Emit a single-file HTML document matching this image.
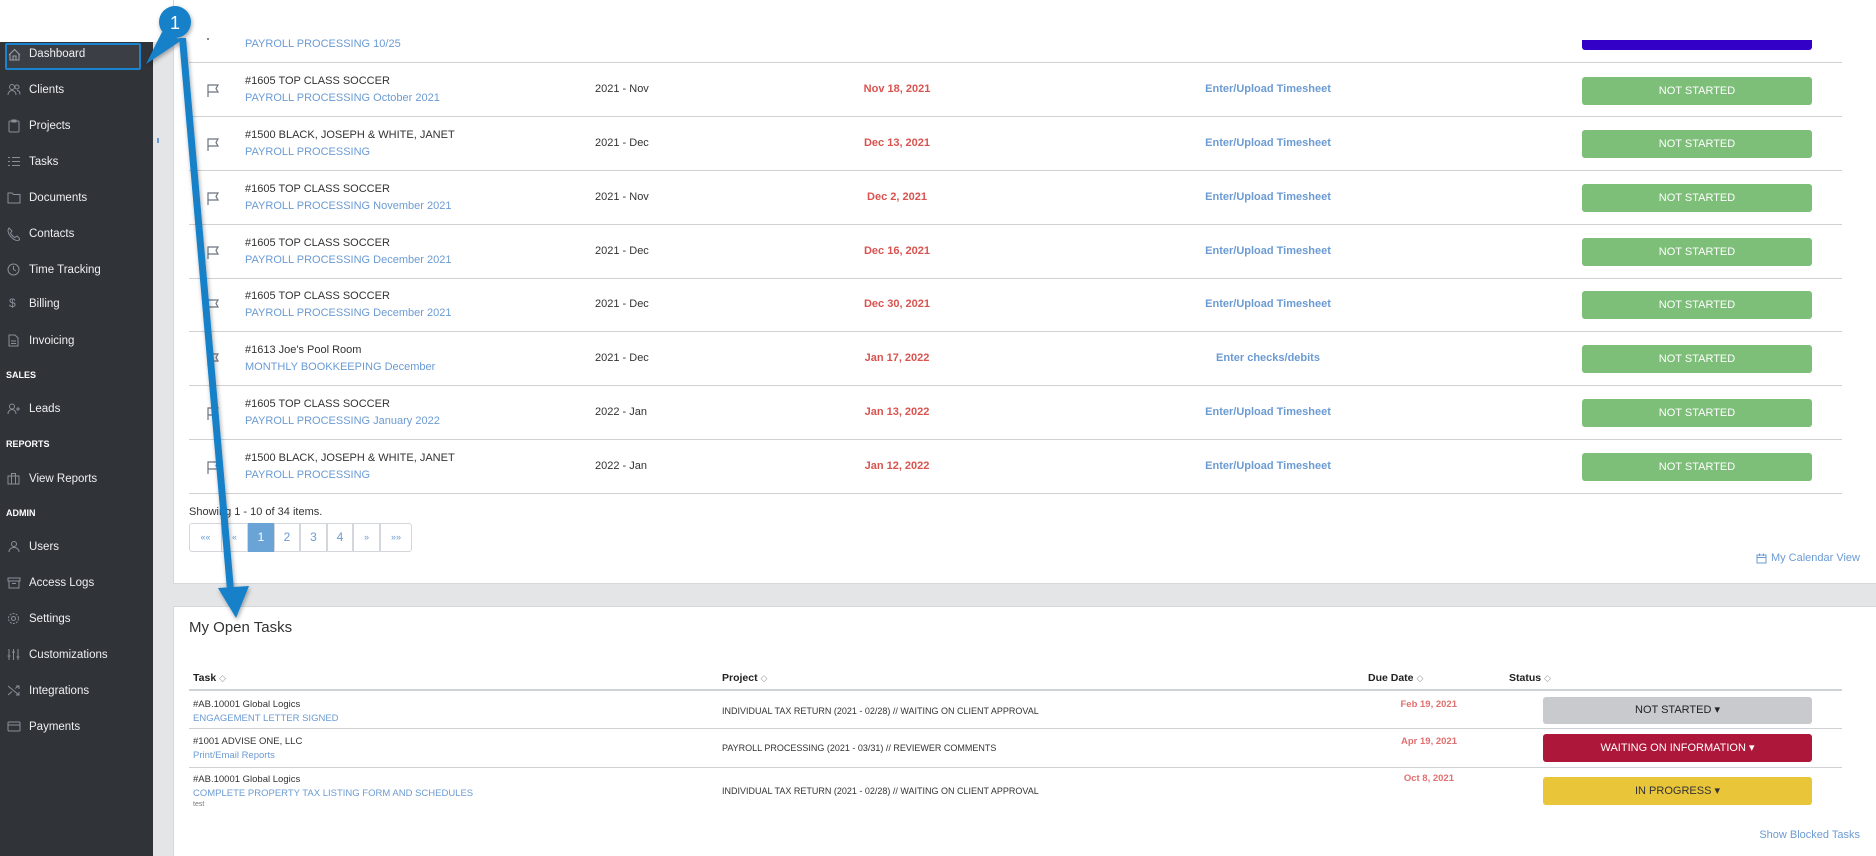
<!DOCTYPE html>
<html><head><meta charset="utf-8"><style>
*{margin:0;padding:0;box-sizing:border-box}
html,body{width:1876px;height:856px;overflow:hidden}
body{background:#fff;font-family:"Liberation Sans",sans-serif;position:relative;font-size:12px;color:#333}
.abs{position:absolute;white-space:nowrap}
#side{position:absolute;left:0;top:42px;width:153px;height:814px;background:#303338}
.mi{position:absolute;left:29px;color:#eef0f2;font-size:11.5px;line-height:14px}
.sec{position:absolute;left:6px;color:#fff;font-size:9px;font-weight:bold;line-height:12px}
#gutter{position:absolute;left:153px;top:42px;width:1723px;height:814px;background:#e4e5e7}
.card{position:absolute;left:173px;right:0;background:#fff;border:1px solid #d5d7da;border-right:none}
.hl{position:absolute;left:189px;width:1653px;height:1px;background:#cfd1d5}
.t1{color:#333;font-size:11px}
.t2{color:#6b9bd3;font-size:11px}
.red{color:#d9534f;font-size:11px;font-weight:bold;transform:translateX(-50%)}
.act{color:#6b9bd3;font-size:11px;font-weight:bold;transform:translateX(-50%)}
.btn{position:absolute;left:1582px;width:230px;height:28px;background:#7dbf78;color:#fff;border-radius:3px;text-align:center;line-height:28px;font-size:11px}
.pg{position:absolute;top:523px;height:29px;border:1px solid #d3d6da;margin-left:-1px;color:#6b9bd3;text-align:center;line-height:27px;font-size:12px;background:#fff}
.flag{position:absolute;left:206px;width:15px;height:15px}
.th{font-weight:bold;font-size:10.5px;color:#222}
.sb{position:absolute;left:1543px;width:269px;border-radius:3px;text-align:center;font-size:11px}
</style></head><body>
<div id="gutter"></div>
<div id="side"></div>
<div class="abs" style="left:5px;top:43px;width:136px;height:27px;border:2px solid #1b84cf;border-radius:2px;background:#3b3f45"></div>
<svg class="abs" style="left:8px;top:48px" width="13" height="13" viewBox="0 0 13 13" fill="none" stroke="#9aa0a8" stroke-width="1.1"><path d="M2 6v6h9V6M1 7l5.5-5.5L12 7M5 12V8h3v4"/></svg>
<div class="mi" style="top:47px">Dashboard</div>
<svg class="abs" style="left:7px;top:83px" width="14" height="13" viewBox="0 0 14 13" fill="none" stroke="#8a9099" stroke-width="1"><circle cx="5" cy="4" r="2.5"/><circle cx="10" cy="4" r="2"/><path d="M1 12c0-3 2-4.5 4-4.5s4 1.5 4 4.5M10 7.5c2 0 3 1.5 3 4"/></svg>
<div class="mi" style="top:83px">Clients</div>
<svg class="abs" style="left:8px;top:119px" width="12" height="14" viewBox="0 0 12 14" fill="none" stroke="#8a9099" stroke-width="1"><rect x="1" y="2" width="10" height="11" rx="1"/><path d="M4 1h4v2H4z"/></svg>
<div class="mi" style="top:119px">Projects</div>
<svg class="abs" style="left:8px;top:156px" width="12" height="11" viewBox="0 0 12 11" stroke="#8a9099" stroke-width="1"><path d="M0 1.5h2M4 1.5h8M0 5.5h2M4 5.5h8M0 9.5h2M4 9.5h8"/></svg>
<div class="mi" style="top:155px">Tasks</div>
<svg class="abs" style="left:7px;top:192px" width="14" height="12" viewBox="0 0 14 12" fill="none" stroke="#8a9099" stroke-width="1"><path d="M1 1h4l1.5 1.5H13V11H1z"/></svg>
<div class="mi" style="top:191px">Documents</div>
<svg class="abs" style="left:7px;top:227px" width="13" height="14" viewBox="0 0 13 14" fill="none" stroke="#8a9099" stroke-width="1"><path d="M2 1l3 3-1.5 2c1 2 2.5 3.5 4.5 4.5L10 9l3 3-2 2C6 13 1 8 1 3z"/></svg>
<div class="mi" style="top:227px">Contacts</div>
<svg class="abs" style="left:7px;top:263px" width="13" height="13" viewBox="0 0 13 13" fill="none" stroke="#8a9099" stroke-width="1"><circle cx="6.5" cy="6.5" r="5.5"/><path d="M6.5 3v3.5l2.5 1.5"/></svg>
<div class="mi" style="top:263px">Time Tracking</div>
<div class="abs" style="left:9px;top:296px;color:#8a9099;font-size:12px">$</div>
<div class="mi" style="top:297px">Billing</div>
<svg class="abs" style="left:8px;top:334px" width="11" height="13" viewBox="0 0 11 13" fill="none" stroke="#8a9099" stroke-width="1"><path d="M1 1h6l3 3v8H1zM3 7h5M3 9.5h5"/></svg>
<div class="mi" style="top:334px">Invoicing</div>
<div class="sec" style="top:369px">SALES</div>
<svg class="abs" style="left:7px;top:403px" width="14" height="12" viewBox="0 0 14 12" fill="none" stroke="#8a9099" stroke-width="1"><circle cx="5" cy="3.5" r="2.5"/><path d="M1 11c0-3 2-4.5 4-4.5s4 1.5 4 4.5M11 4v4M9 6h4"/></svg>
<div class="mi" style="top:402px">Leads</div>
<div class="sec" style="top:438px">REPORTS</div>
<svg class="abs" style="left:7px;top:472px" width="13" height="13" viewBox="0 0 13 13" fill="none" stroke="#8a9099" stroke-width="1"><rect x="1" y="4" width="11" height="8"/><path d="M4.5 4V12M8.5 4V12M4.5 4V1.5h4V4"/></svg>
<div class="mi" style="top:472px">View Reports</div>
<div class="sec" style="top:507px">ADMIN</div>
<svg class="abs" style="left:8px;top:540px" width="12" height="13" viewBox="0 0 12 13" fill="none" stroke="#8a9099" stroke-width="1"><circle cx="6" cy="4" r="2.5"/><path d="M1 12c0-3 2.5-4.5 5-4.5s5 1.5 5 4.5"/></svg>
<div class="mi" style="top:540px">Users</div>
<svg class="abs" style="left:7px;top:577px" width="14" height="12" viewBox="0 0 14 12" fill="none" stroke="#8a9099" stroke-width="1"><rect x="1" y="1" width="12" height="3"/><path d="M2 4v7h10V4M5 6.5h4"/></svg>
<div class="mi" style="top:576px">Access Logs</div>
<svg class="abs" style="left:7px;top:612px" width="13" height="13" viewBox="0 0 13 13" fill="none" stroke="#8a9099" stroke-width="1"><circle cx="6.5" cy="6.5" r="2"/><circle cx="6.5" cy="6.5" r="5" stroke-dasharray="2 1.2"/></svg>
<div class="mi" style="top:612px">Settings</div>
<svg class="abs" style="left:7px;top:648px" width="13" height="13" viewBox="0 0 13 13" stroke="#8a9099" stroke-width="1"><path d="M2 1v11M6.5 1v11M11 1v11M0.5 8h3M5 4h3M9.5 9h3"/></svg>
<div class="mi" style="top:648px">Customizations</div>
<svg class="abs" style="left:7px;top:684px" width="13" height="13" viewBox="0 0 13 13" fill="none" stroke="#8a9099" stroke-width="1"><path d="M1 2l11 9M9 11h3V8M1 11l4-3.5M8 4.5L12 2M9 2h3v3"/></svg>
<div class="mi" style="top:684px">Integrations</div>
<svg class="abs" style="left:7px;top:721px" width="14" height="11" viewBox="0 0 14 11" fill="none" stroke="#8a9099" stroke-width="1"><rect x="1" y="1" width="12" height="9" rx="1"/><path d="M1 4h12"/></svg>
<div class="mi" style="top:720px">Payments</div>
<div class="abs" style="left:157px;top:138px;width:2px;height:5px;background:#6b9bd3"></div>

<div class="abs" style="left:0;top:0;width:1876px;height:42px;background:#fff"></div>
<div class="card" style="top:-1px;height:585px;border-top:none"></div>
<div class="card" style="top:606px;height:250px;border-bottom:none"></div>

<div class="abs t2" style="left:245px;top:38px">PAYROLL PROCESSING 10/25</div>
<div class="abs" style="left:207px;top:38px;width:2px;height:2px;background:#888"></div>
<div class="abs" style="left:1582px;top:40px;width:230px;height:10px;background:#3300c8;border-radius:0 0 3px 3px"></div>

<div class="hl" style="top:62px"></div>
<div class="hl" style="top:116px"></div>
<div class="hl" style="top:170px"></div>
<div class="hl" style="top:224px"></div>
<div class="hl" style="top:278px"></div>
<div class="hl" style="top:331px"></div>
<div class="hl" style="top:385px"></div>
<div class="hl" style="top:439px"></div>
<div class="hl" style="top:493px"></div>

<svg class="flag" style="top:83px" viewBox="0 0 15 15" fill="none" stroke="#6c7380" stroke-width="1.2"><path d="M2 14V2h10l-2 3.5 2 3.5H2"/></svg>
<div class="abs t1" style="left:245px;top:75px">#1605 TOP CLASS SOCCER</div>
<div class="abs t2" style="left:245px;top:92px">PAYROLL PROCESSING October 2021</div>
<div class="abs t1" style="left:595px;top:83px">2021 - Nov</div>
<div class="abs red" style="left:897px;top:83px">Nov 18, 2021</div>
<div class="abs act" style="left:1268px;top:83px">Enter/Upload Timesheet</div>
<div class="btn" style="top:77px">NOT STARTED</div>

<svg class="flag" style="top:137px" viewBox="0 0 15 15" fill="none" stroke="#6c7380" stroke-width="1.2"><path d="M2 14V2h10l-2 3.5 2 3.5H2"/></svg>
<div class="abs t1" style="left:245px;top:129px">#1500 BLACK, JOSEPH &amp; WHITE, JANET</div>
<div class="abs t2" style="left:245px;top:146px">PAYROLL PROCESSING</div>
<div class="abs t1" style="left:595px;top:137px">2021 - Dec</div>
<div class="abs red" style="left:897px;top:137px">Dec 13, 2021</div>
<div class="abs act" style="left:1268px;top:137px">Enter/Upload Timesheet</div>
<div class="btn" style="top:130px">NOT STARTED</div>

<svg class="flag" style="top:191px" viewBox="0 0 15 15" fill="none" stroke="#6c7380" stroke-width="1.2"><path d="M2 14V2h10l-2 3.5 2 3.5H2"/></svg>
<div class="abs t1" style="left:245px;top:183px">#1605 TOP CLASS SOCCER</div>
<div class="abs t2" style="left:245px;top:200px">PAYROLL PROCESSING November 2021</div>
<div class="abs t1" style="left:595px;top:191px">2021 - Nov</div>
<div class="abs red" style="left:897px;top:191px">Dec 2, 2021</div>
<div class="abs act" style="left:1268px;top:191px">Enter/Upload Timesheet</div>
<div class="btn" style="top:184px">NOT STARTED</div>

<svg class="flag" style="top:245px" viewBox="0 0 15 15" fill="none" stroke="#6c7380" stroke-width="1.2"><path d="M2 14V2h10l-2 3.5 2 3.5H2"/></svg>
<div class="abs t1" style="left:245px;top:237px">#1605 TOP CLASS SOCCER</div>
<div class="abs t2" style="left:245px;top:254px">PAYROLL PROCESSING December 2021</div>
<div class="abs t1" style="left:595px;top:245px">2021 - Dec</div>
<div class="abs red" style="left:897px;top:245px">Dec 16, 2021</div>
<div class="abs act" style="left:1268px;top:245px">Enter/Upload Timesheet</div>
<div class="btn" style="top:238px">NOT STARTED</div>

<svg class="flag" style="top:298px" viewBox="0 0 15 15" fill="none" stroke="#6c7380" stroke-width="1.2"><path d="M2 14V2h10l-2 3.5 2 3.5H2"/></svg>
<div class="abs t1" style="left:245px;top:290px">#1605 TOP CLASS SOCCER</div>
<div class="abs t2" style="left:245px;top:307px">PAYROLL PROCESSING December 2021</div>
<div class="abs t1" style="left:595px;top:298px">2021 - Dec</div>
<div class="abs red" style="left:897px;top:298px">Dec 30, 2021</div>
<div class="abs act" style="left:1268px;top:298px">Enter/Upload Timesheet</div>
<div class="btn" style="top:291px">NOT STARTED</div>

<svg class="flag" style="top:352px" viewBox="0 0 15 15" fill="none" stroke="#6c7380" stroke-width="1.2"><path d="M2 14V2h10l-2 3.5 2 3.5H2"/></svg>
<div class="abs t1" style="left:245px;top:344px">#1613 Joe's Pool Room</div>
<div class="abs t2" style="left:245px;top:361px">MONTHLY BOOKKEEPING December</div>
<div class="abs t1" style="left:595px;top:352px">2021 - Dec</div>
<div class="abs red" style="left:897px;top:352px">Jan 17, 2022</div>
<div class="abs act" style="left:1268px;top:352px">Enter checks/debits</div>
<div class="btn" style="top:345px">NOT STARTED</div>

<svg class="flag" style="top:406px" viewBox="0 0 15 15" fill="none" stroke="#6c7380" stroke-width="1.2"><path d="M2 14V2h10l-2 3.5 2 3.5H2"/></svg>
<div class="abs t1" style="left:245px;top:398px">#1605 TOP CLASS SOCCER</div>
<div class="abs t2" style="left:245px;top:415px">PAYROLL PROCESSING January 2022</div>
<div class="abs t1" style="left:595px;top:406px">2022 - Jan</div>
<div class="abs red" style="left:897px;top:406px">Jan 13, 2022</div>
<div class="abs act" style="left:1268px;top:406px">Enter/Upload Timesheet</div>
<div class="btn" style="top:399px">NOT STARTED</div>

<svg class="flag" style="top:460px" viewBox="0 0 15 15" fill="none" stroke="#6c7380" stroke-width="1.2"><path d="M2 14V2h10l-2 3.5 2 3.5H2"/></svg>
<div class="abs t1" style="left:245px;top:452px">#1500 BLACK, JOSEPH &amp; WHITE, JANET</div>
<div class="abs t2" style="left:245px;top:469px">PAYROLL PROCESSING</div>
<div class="abs t1" style="left:595px;top:460px">2022 - Jan</div>
<div class="abs red" style="left:897px;top:460px">Jan 12, 2022</div>
<div class="abs act" style="left:1268px;top:460px">Enter/Upload Timesheet</div>
<div class="btn" style="top:453px">NOT STARTED</div>

<div class="abs t1" style="left:189px;top:506px">Showing 1 - 10 of 34 items.</div>
<div class="pg" style="left:190px;width:33px;border-radius:3px 0 0 3px;font-size:9px">««</div>
<div class="pg" style="left:222px;width:27px;font-size:9px">«</div>
<div class="pg" style="left:249px;width:26px;background:#6aa3d5;border-color:#6aa3d5;color:#fff">1</div>
<div class="pg" style="left:275px;width:26px">2</div>
<div class="pg" style="left:301px;width:27px">3</div>
<div class="pg" style="left:328px;width:26px">4</div>
<div class="pg" style="left:354px;width:27px;font-size:9px">»</div>
<div class="pg" style="left:381px;width:32px;border-radius:0 3px 3px 0;font-size:9px">»»</div>
<svg class="abs" style="left:1756px;top:553px" width="11" height="11" viewBox="0 0 11 11" fill="none" stroke="#6b9bd3" stroke-width="1"><rect x="1" y="2" width="9" height="8"/><path d="M1 4.5h9M3.5 0.5v2.5M7.5 0.5v2.5"/></svg>
<div class="abs t2" style="right:16px;top:552px">My Calendar View</div>

<div class="abs" style="left:189px;top:619px;font-size:15px;color:#333">My Open Tasks</div>
<div class="abs th" style="left:193px;top:672px">Task <span style="color:#999;font-weight:normal;font-size:9px">◇</span></div>
<div class="abs th" style="left:722px;top:672px">Project <span style="color:#999;font-weight:normal;font-size:9px">◇</span></div>
<div class="abs th" style="left:1368px;top:672px">Due Date <span style="color:#999;font-weight:normal;font-size:9px">◇</span></div>
<div class="abs th" style="left:1509px;top:672px">Status <span style="color:#999;font-weight:normal;font-size:9px">◇</span></div>
<div class="abs" style="left:189px;top:689px;width:1653px;height:2px;background:#cfd2d6"></div>
<div class="hl" style="top:728px"></div>
<div class="hl" style="top:767px"></div>

<div class="abs" style="left:193px;top:699px;font-size:9.5px;color:#333">#AB.10001 Global Logics</div>
<div class="abs" style="left:193px;top:713px;font-size:9.5px;color:#6b9bd3">ENGAGEMENT LETTER SIGNED</div>
<div class="abs" style="left:722px;top:706px;font-size:9px;color:#333">INDIVIDUAL TAX RETURN (2021 - 02/28) // WAITING ON CLIENT APPROVAL</div>
<div class="abs" style="right:419px;top:699px;font-size:9.5px;font-weight:bold;color:#e07070">Feb 19, 2021</div>
<div class="sb" style="top:697px;height:27px;line-height:27px;background:#c8cacd;color:#222">NOT STARTED ▾</div>

<div class="abs" style="left:193px;top:736px;font-size:9.5px;color:#333">#1001 ADVISE ONE, LLC</div>
<div class="abs" style="left:193px;top:750px;font-size:9.5px;color:#6b9bd3">Print/Email Reports</div>
<div class="abs" style="left:722px;top:743px;font-size:9px;color:#333">PAYROLL PROCESSING (2021 - 03/31) // REVIEWER COMMENTS</div>
<div class="abs" style="right:419px;top:736px;font-size:9.5px;font-weight:bold;color:#e07070">Apr 19, 2021</div>
<div class="sb" style="top:734px;height:28px;line-height:28px;background:#ad1739;color:#fff">WAITING ON INFORMATION ▾</div>

<div class="abs" style="left:193px;top:774px;font-size:9.5px;color:#333">#AB.10001 Global Logics</div>
<div class="abs" style="left:193px;top:788px;font-size:9.5px;color:#6b9bd3">COMPLETE PROPERTY TAX LISTING FORM AND SCHEDULES</div>
<div class="abs" style="left:193px;top:801px;font-size:7px;color:#777">test</div>
<div class="abs" style="left:722px;top:786px;font-size:9px;color:#333">INDIVIDUAL TAX RETURN (2021 - 02/28) // WAITING ON CLIENT APPROVAL</div>
<div class="abs" style="right:422px;top:773px;font-size:9.5px;font-weight:bold;color:#e07070">Oct 8, 2021</div>
<div class="sb" style="top:777px;height:28px;line-height:28px;background:#e9c53a;color:#333">IN PROGRESS ▾</div>

<div class="abs t2" style="right:16px;top:829px">Show Blocked Tasks</div>

<svg class="abs" style="left:0;top:0" width="400" height="640" viewBox="0 0 400 640">
<defs><filter id="sh" x="-50%" y="-50%" width="200%" height="200%"><feDropShadow dx="1" dy="2" stdDeviation="2" flood-color="#000" flood-opacity="0.35"/></filter></defs>
<g filter="url(#sh)" fill="#1580c9">
<path d="M179 38 L186 38 L234 590 L227 590 Z"/>
<path d="M218 588 L249 586 L236 618 Z"/>
<path d="M162 32 L182 40 L146 64 Z"/>
<circle cx="175" cy="22" r="16"/>
</g>
<text x="175" y="29" text-anchor="middle" fill="#fff" font-family="Liberation Sans" font-size="18">1</text>
</svg>
</body></html>
